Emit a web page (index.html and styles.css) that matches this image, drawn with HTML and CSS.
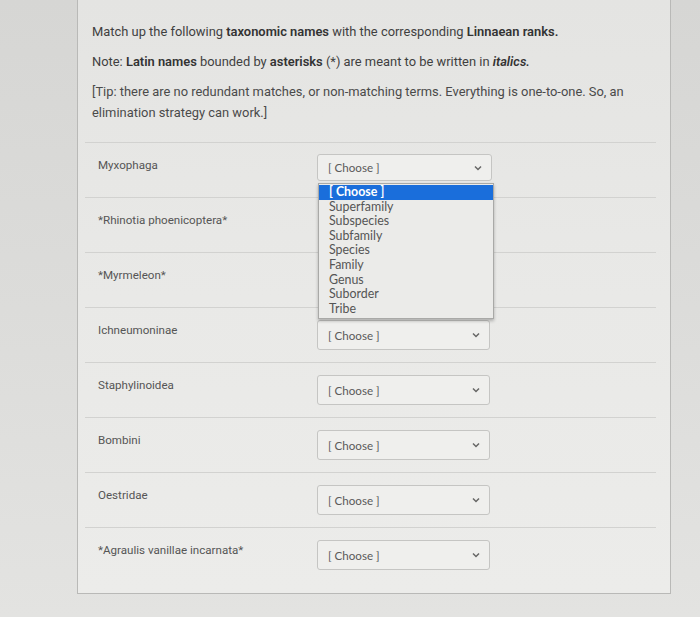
FILE: index.html
```html
<!DOCTYPE html>
<html>
<head>
<meta charset="utf-8">
<link rel="stylesheet" href="styles.css">
</head>
<body>
<div class="card">
  <div class="intro">
    <p>Match up the following <b>taxonomic names</b> with the corresponding <b>Linnaean ranks.</b></p>
    <p>Note: <b>Latin names</b> bounded by <b>asterisks</b> (*) are meant to be written in <b><i>italics.</i></b></p>
    <p class="tip">[Tip: there are no redundant matches, or non-matching terms. Everything is one-to-one. So, an elimination strategy can work.]</p>
  </div>
  <div class="rows">
    <div class="row">
      <div class="label">Myxophaga</div>
      <div class="selwrap">
        <div class="select"><span>[ Choose ]</span><svg class="chev" width="8" height="6" viewBox="0 0 8 6"><path d="M1 1.5 L4 4.5 L7 1.5" fill="none" stroke="#666" stroke-width="1.5"/></svg></div>
        <ul class="menu">
          <li class="sel">[ Choose ]</li>
          <li>Superfamily</li>
          <li>Subspecies</li>
          <li>Subfamily</li>
          <li>Species</li>
          <li>Family</li>
          <li>Genus</li>
          <li>Suborder</li>
          <li>Tribe</li>
        </ul>
      </div>
    </div>
    <div class="row">
      <div class="label">*Rhinotia phoenicoptera*</div>
    </div>
    <div class="row">
      <div class="label">*Myrmeleon*</div>
    </div>
    <div class="row">
      <div class="label">Ichneumoninae</div>
      <div class="select tall"><span>[ Choose ]</span><svg class="chev" width="8" height="6" viewBox="0 0 8 6"><path d="M1 1.5 L4 4.5 L7 1.5" fill="none" stroke="#666" stroke-width="1.5"/></svg></div>
    </div>
    <div class="row">
      <div class="label">Staphylinoidea</div>
      <div class="select tall"><span>[ Choose ]</span><svg class="chev" width="8" height="6" viewBox="0 0 8 6"><path d="M1 1.5 L4 4.5 L7 1.5" fill="none" stroke="#666" stroke-width="1.5"/></svg></div>
    </div>
    <div class="row">
      <div class="label">Bombini</div>
      <div class="select tall"><span>[ Choose ]</span><svg class="chev" width="8" height="6" viewBox="0 0 8 6"><path d="M1 1.5 L4 4.5 L7 1.5" fill="none" stroke="#666" stroke-width="1.5"/></svg></div>
    </div>
    <div class="row">
      <div class="label">Oestridae</div>
      <div class="select tall"><span>[ Choose ]</span><svg class="chev" width="8" height="6" viewBox="0 0 8 6"><path d="M1 1.5 L4 4.5 L7 1.5" fill="none" stroke="#666" stroke-width="1.5"/></svg></div>
    </div>
    <div class="row last">
      <div class="label">*Agraulis vanillae incarnata*</div>
      <div class="select tall"><span>[ Choose ]</span><svg class="chev" width="8" height="6" viewBox="0 0 8 6"><path d="M1 1.5 L4 4.5 L7 1.5" fill="none" stroke="#666" stroke-width="1.5"/></svg></div>
    </div>
  </div>
</div>
</body>
</html>
```

FILE: styles.css
```css
html, body {
  margin: 0;
  padding: 0;
}
body {
  width: 700px;
  height: 617px;
  overflow: hidden;
  background: linear-gradient(180deg, #d6d6d4 0%, #dcdcda 50%, #e3e3e1 100%);
  font-family: Roboto, "Liberation Sans", sans-serif;
}
.card {
  margin-left: 77px;
  width: 594px;
  height: 594px;
  box-sizing: border-box;
  border: 1px solid #b9b9b7;
  border-top: none;
  background: linear-gradient(180deg, #e4e4e2 0%, #e9e9e7 50%, #ececea 100%);
}
.intro {
  padding: 21px 40px 0 14px;
  color: #3f3f3f;
  font-size: 12.9px;
  line-height: 21px;
}
.intro p {
  margin: 0 0 9px 0;
}
.intro b {
  font-weight: 600;
  color: #333;
}
.intro .tip {
  color: #4a4a4a;
  margin-bottom: 0;
}
.rows {
  margin: 19px 14px 0 7px;
}
.row {
  display: flex;
  align-items: flex-start;
  height: 54px;
  border-top: 1px solid #d2d2d0;
}
.label {
  width: 232px;
  padding: 14px 0 0 13px;
  box-sizing: border-box;
  font-size: 11.6px;
  line-height: 16px;
  color: #555;
}
.selwrap {
  position: relative;
  margin-top: 11px;
}
.select {
  width: 175px;
  height: 27px;
  box-sizing: border-box;
  border: 1px solid #c5c5c3;
  border-radius: 3px;
  background: #efefed;
  display: flex;
  align-items: center;
  justify-content: space-between;
  padding: 0 9px 0 10px;
  font-family: Lato, "Open Sans", sans-serif;
  font-size: 11.6px;
  color: #5a5a5a;
}
.select.tall {
  margin-top: 12px;
  height: 30px;
  width: 173px;
}
.chev {
  display: block;
}
.menu {
  position: absolute;
  top: 29px;
  left: 1px;
  width: 176px;
  margin: 0;
  padding: 1px 0 2px 0;
  list-style: none;
  background: #ebebe9;
  border: 1px solid #a9a9a7;
  box-shadow: 0 2px 3px rgba(0,0,0,0.25);
  font-family: Lato, "Open Sans", sans-serif;
  font-size: 12.4px;
  line-height: 14.6px;
  color: #555;
  box-sizing: border-box;
}
.menu li {
  padding-left: 10px;
}
.menu li.sel {
  background: #1a6edb;
  color: #fff;
  font-weight: 700;
}
```
